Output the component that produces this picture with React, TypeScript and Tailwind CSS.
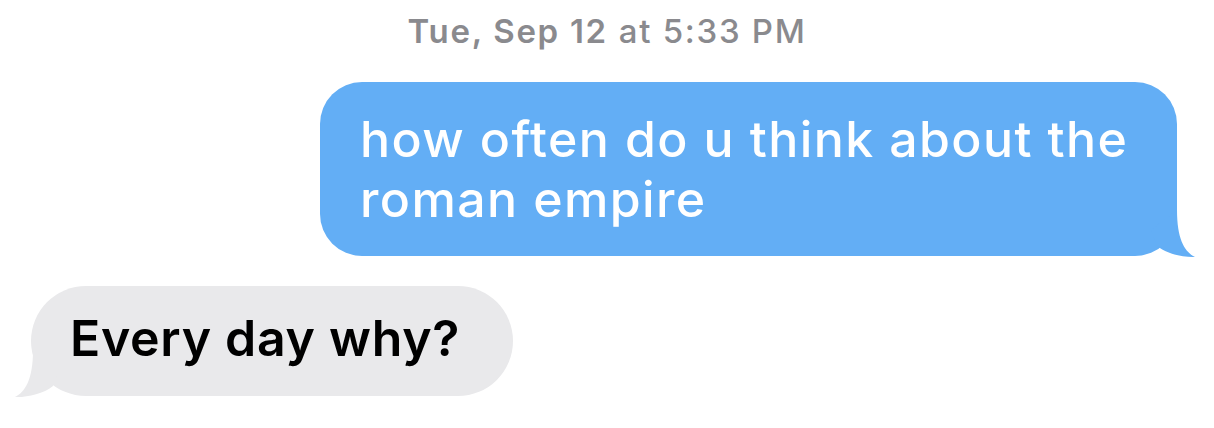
import React from "react";

const font = { fontFamily: "Inter, 'Noto Sans', sans-serif" };

export default function App() {
  return (
    <div
      className="w-[1214px] h-[428px] bg-white flex flex-col overflow-hidden"
      style={font}
    >
      <div className="pt-[11px] text-center text-[33px] leading-[40px] text-[#8a8a8e] tracking-[1.7px]">
        <span className="font-semibold">Tue, Sep 12</span>{" "}
        <span className="font-medium">at 5:33 PM</span>
      </div>

      <div className="mt-[31px] flex justify-end pr-[37px]">
        <div className="relative w-[857px] rounded-[42px] bg-[#63aef5] pl-[40px] pr-[30px] pt-[27px] pb-[27px] text-[50px] leading-[60px] font-medium tracking-[1.4px] text-white">
          how often do u think about the roman empire
          <svg
            className="absolute right-[-20px] bottom-[-2px]"
            width="52"
            height="52"
            viewBox="0 0 52 52"
          >
            <path
              d="M32 4 C32 34 40 46 50 51 C38 51.5 22 48 12 40 L6 24 Z"
              fill="#63aef5"
            />
          </svg>
        </div>
      </div>

      <div className="mt-[30px] flex pl-[31px]">
        <div className="relative rounded-[55px] bg-[#e9e9eb] pl-[39px] pr-[53px] pt-[22px] pb-[28px] text-[50px] leading-[60px] font-semibold tracking-[0.7px] text-black">
          Every day why?
          <svg
            className="absolute left-[-18px] bottom-[-2px]"
            width="52"
            height="52"
            viewBox="0 0 52 52"
          >
            <path
              d="M20 4 C20 34 12 46 2 51 C14 51.5 30 48 40 40 L46 24 Z"
              fill="#e9e9eb"
            />
          </svg>
        </div>
      </div>
    </div>
  );
}
